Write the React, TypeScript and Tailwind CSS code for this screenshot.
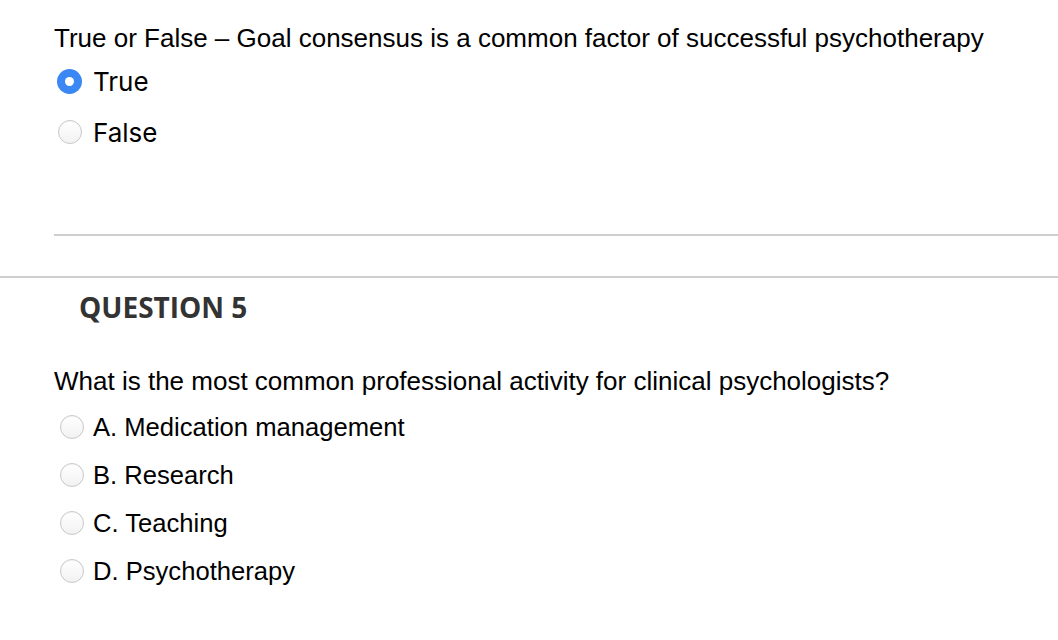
import React from "react";

function Radio({ checked }: { checked?: boolean }) {
  if (checked) {
    return (
      <span className="flex h-[25px] w-[25px] shrink-0 items-center justify-center rounded-full bg-[#3b87f4]">
        <span className="h-[9px] w-[9px] rounded-full bg-white" />
      </span>
    );
  }
  return (
    <span className="h-[24px] w-[24px] shrink-0 rounded-full border border-[#c8c8c8] bg-gradient-to-b from-white to-[#f2f2f2] shadow-[inset_0_1px_1px_rgba(0,0,0,0.04)]" />
  );
}

const arial = { fontFamily: '"Liberation Sans", Arial, sans-serif' };

export default function App() {
  const options = [
    "A. Medication management",
    "B. Research",
    "C. Teaching",
    "D. Psychotherapy",
  ];

  return (
    <div className="h-[640px] w-[1058px] overflow-hidden bg-white text-black">
      {/* Question 4 */}
      <div className="pl-[54px] pt-[23px]">
        <p className="whitespace-nowrap text-[26px] leading-[30px]" style={arial}>
          True or False – Goal consensus is a common factor of successful psychotherapy
        </p>
        <div className="mt-[15px] flex flex-col gap-[25px]" style={{ fontFamily: "Inter, sans-serif" }}>
          <label className="flex h-[26px] items-center gap-[11px] pl-[3px] text-[26px]">
            <Radio checked />
            <span>True</span>
          </label>
          <label className="flex h-[26px] items-center gap-[11px] pl-[4px] text-[26px]">
            <Radio />
            <span>False</span>
          </label>
        </div>
        <div className="mt-[89px] h-[2px] bg-[#cfcfcf]" />
      </div>

      <div className="mt-[40px] h-[2px] bg-[#cfcfcf]" />

      {/* Question 5 */}
      <div className="pl-[79px] pt-[12px]">
        <h2
          className="text-[28px] font-bold leading-[34px] text-[#333333]"
          style={{ fontFamily: '"Open Sans", sans-serif' }}
        >
          QUESTION 5
        </h2>
      </div>
      <div className="pl-[54px] pt-[42px]" style={arial}>
        <p className="whitespace-nowrap text-[26px] leading-[30px]">
          What is the most common professional activity for clinical psychologists?
        </p>
        <div className="mt-[18px] flex flex-col gap-[22px]">
          {options.map((o) => (
            <label key={o} className="flex h-[26px] items-center gap-[9px] pl-[6px] text-[25.6px]">
              <Radio />
              <span>{o}</span>
            </label>
          ))}
        </div>
      </div>
    </div>
  );
}
